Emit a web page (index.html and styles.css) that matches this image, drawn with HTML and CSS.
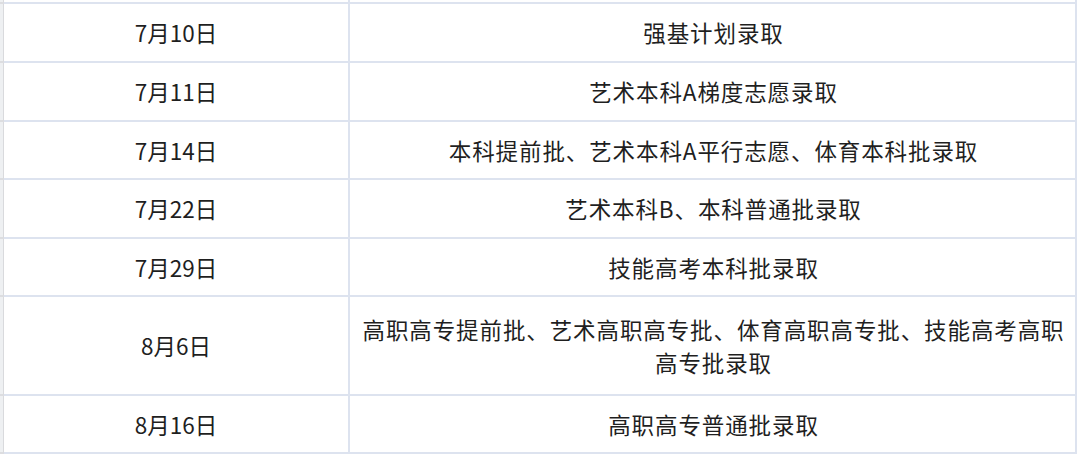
FILE: index.html
```html
<!DOCTYPE html>
<html lang="zh">
<head>
<meta charset="utf-8">
<link rel="stylesheet" href="styles.css">
</head>
<body>
<div class="sheet">
  <div class="g top"></div><div class="c top"></div><div class="c last top"></div>

  <div class="g"></div><div class="c">7月10日</div><div class="c last">强基计划录取</div>
  <div class="g"></div><div class="c">7月11日</div><div class="c last">艺术本科A梯度志愿录取</div>
  <div class="g"></div><div class="c">7月14日</div><div class="c last">本科提前批、艺术本科A平行志愿、体育本科批录取</div>
  <div class="g"></div><div class="c">7月22日</div><div class="c last">艺术本科B、本科普通批录取</div>
  <div class="g"></div><div class="c">7月29日</div><div class="c last">技能高考本科批录取</div>
  <div class="g"></div><div class="c">8月6日</div><div class="c last">高职高专提前批、艺术高职高专批、体育高职高专批、技能高考高职高专批录取</div>
  <div class="g"></div><div class="c">8月16日</div><div class="c last">高职高专普通批录取</div>
</div>
</body>
</html>
```
FILE: styles.css
```css
html, body {
  margin: 0;
  padding: 0;
  background: #ffffff;
}
body {
  width: 1080px;
  height: 456px;
  overflow: hidden;
  font-family: "Noto Sans CJK SC", "Noto Sans", sans-serif;
  color: #1f1f1f;
}
.sheet {
  display: grid;
  grid-template-columns: 4px 346px 727px;
  grid-template-rows: 4px 59px 59px 58px 59px 58px 99px 58px;
}
.g {
  box-sizing: border-box;
  background: #eef0f2;
  border-right: 1px solid #d9dadd;
  border-bottom: 2px solid #dcdde0;
}
.c {
  box-sizing: border-box;
  border-right: 2px solid #dde3ef;
  border-bottom: 2px solid #dde3ef;
  display: flex;
  align-items: center;
  justify-content: center;
  text-align: center;
  font-size: 22.5px;
  line-height: 33px;
  padding: 0 12px;
}
.c.last {
  padding: 0 8px 0 10px;
  letter-spacing: 0.9px;
}
```
